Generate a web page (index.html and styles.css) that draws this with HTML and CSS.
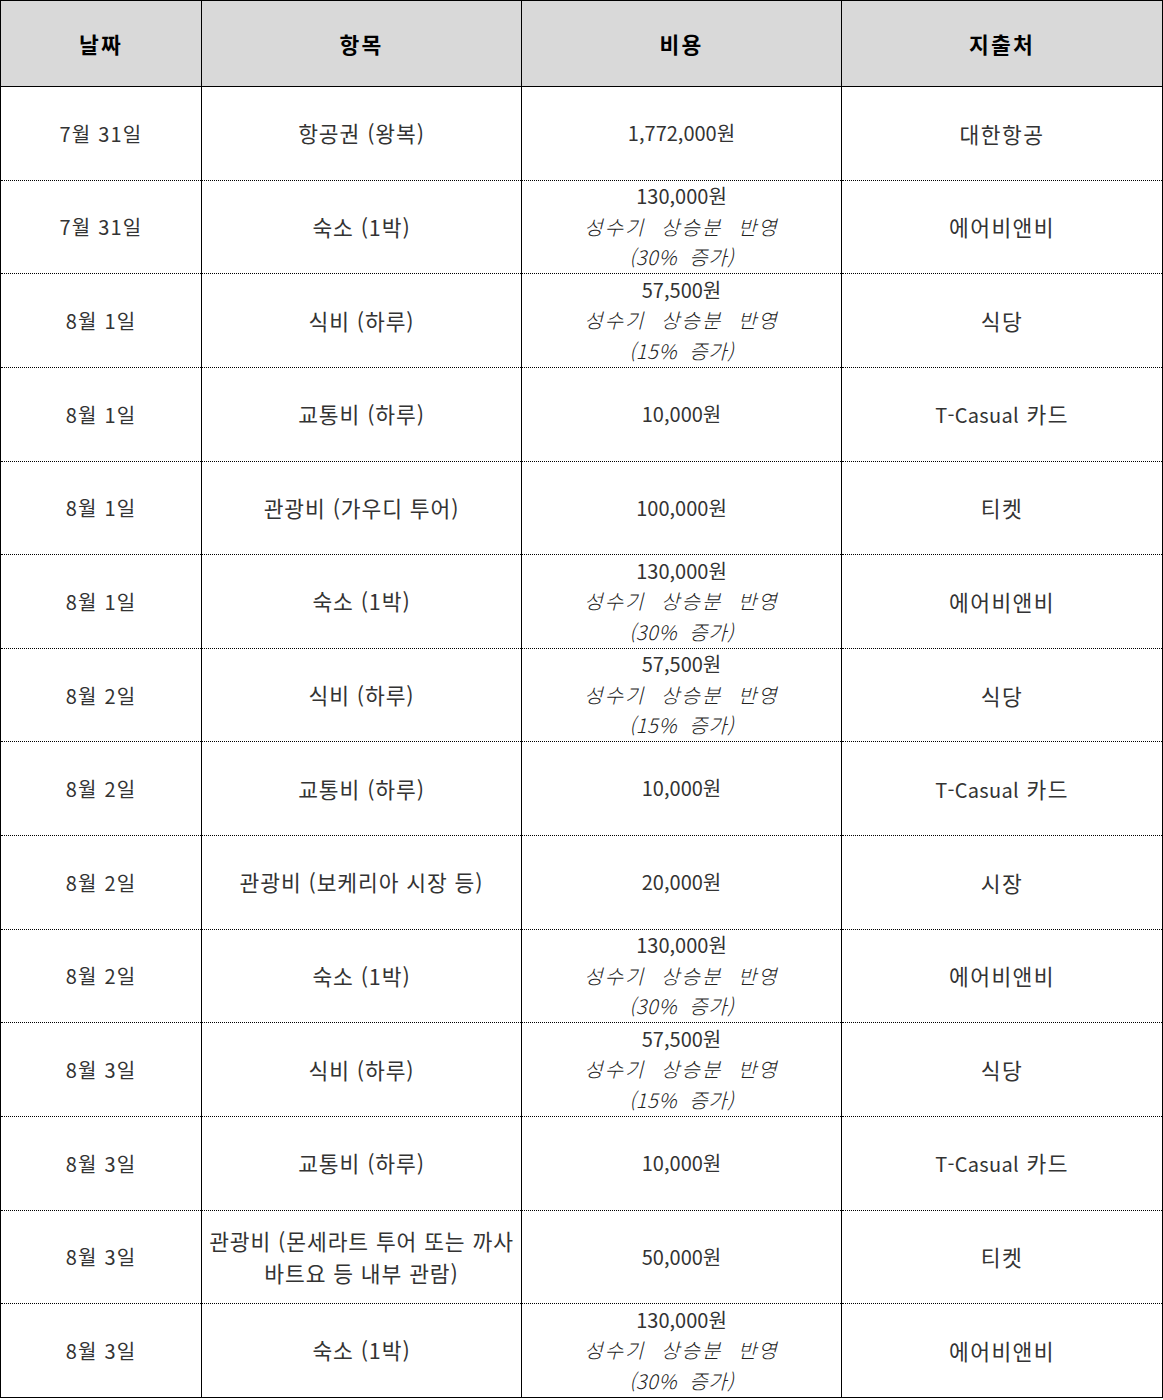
FILE: index.html
```html
<!DOCTYPE html>
<html lang="ko">
<head>
<meta charset="utf-8">
<title>여행 경비</title>
<link rel="stylesheet" href="styles.css">
</head>
<body>
<table class="budget">
  <colgroup>
    <col class="c-date"><col class="c-item"><col class="c-cost"><col class="c-place">
  </colgroup>
  <thead>
    <tr><th>날짜</th><th>항목</th><th>비용</th><th>지출처</th></tr>
  </thead>
  <tbody>
    <tr><td class="date">7월 31일</td><td class="item">항공권 (왕복)</td><td class="cost">1,772,000원</td><td class="place">대한항공</td></tr>
    <tr><td class="date">7월 31일</td><td class="item">숙소 (1박)</td><td class="cost">130,000원<br><span class="note-a">성수기 상승분 반영</span><br><span class="note-b">(30% 증가)</span></td><td class="place">에어비앤비</td></tr>
    <tr><td class="date">8월 1일</td><td class="item">식비 (하루)</td><td class="cost">57,500원<br><span class="note-a">성수기 상승분 반영</span><br><span class="note-b">(15% 증가)</span></td><td class="place">식당</td></tr>
    <tr><td class="date">8월 1일</td><td class="item">교통비 (하루)</td><td class="cost">10,000원</td><td class="place"><span class="latin">T-Casual</span> 카드</td></tr>
    <tr><td class="date">8월 1일</td><td class="item">관광비 (가우디 투어)</td><td class="cost">100,000원</td><td class="place">티켓</td></tr>
    <tr><td class="date">8월 1일</td><td class="item">숙소 (1박)</td><td class="cost">130,000원<br><span class="note-a">성수기 상승분 반영</span><br><span class="note-b">(30% 증가)</span></td><td class="place">에어비앤비</td></tr>
    <tr><td class="date">8월 2일</td><td class="item">식비 (하루)</td><td class="cost">57,500원<br><span class="note-a">성수기 상승분 반영</span><br><span class="note-b">(15% 증가)</span></td><td class="place">식당</td></tr>
    <tr><td class="date">8월 2일</td><td class="item">교통비 (하루)</td><td class="cost">10,000원</td><td class="place"><span class="latin">T-Casual</span> 카드</td></tr>
    <tr><td class="date">8월 2일</td><td class="item">관광비 (보케리아 시장 등)</td><td class="cost">20,000원</td><td class="place">시장</td></tr>
    <tr><td class="date">8월 2일</td><td class="item">숙소 (1박)</td><td class="cost">130,000원<br><span class="note-a">성수기 상승분 반영</span><br><span class="note-b">(30% 증가)</span></td><td class="place">에어비앤비</td></tr>
    <tr><td class="date">8월 3일</td><td class="item">식비 (하루)</td><td class="cost">57,500원<br><span class="note-a">성수기 상승분 반영</span><br><span class="note-b">(15% 증가)</span></td><td class="place">식당</td></tr>
    <tr><td class="date">8월 3일</td><td class="item">교통비 (하루)</td><td class="cost">10,000원</td><td class="place"><span class="latin">T-Casual</span> 카드</td></tr>
    <tr><td class="date">8월 3일</td><td class="item">관광비 (몬세라트 투어 또는 까사<br>바트요 등 내부 관람)</td><td class="cost">50,000원</td><td class="place">티켓</td></tr>
    <tr><td class="date">8월 3일</td><td class="item">숙소 (1박)</td><td class="cost">130,000원<br><span class="note-a">성수기 상승분 반영</span><br><span class="note-b">(30% 증가)</span></td><td class="place">에어비앤비</td></tr>
  </tbody>
</table>
</body>
</html>
```
FILE: styles.css
```css
html, body {
  margin: 0;
  padding: 0;
  background: #ffffff;
}

.budget {
  border-collapse: collapse;
  table-layout: fixed;
  width: 1162px;
  font-family: "Noto Sans CJK KR", "Noto Sans", sans-serif;
  font-size: 20px;
  color: #333333;
}

.c-date { width: 201px; }
.c-item { width: 320px; }
.c-cost { width: 320px; }
.c-place { width: 321px; }

.budget th,
.budget td {
  border-left: 1px solid #000;
  border-right: 1px solid #000;
  text-align: center;
  vertical-align: middle;
  padding: 0;
  line-height: 31px;
  white-space: nowrap;
}

.budget thead tr {
  height: 86px;
}

.budget th {
  background: #d9d9d9;
  color: #000;
  font-weight: bold;
  font-size: 21.5px;
  letter-spacing: 2.3px;
  border-top: 1px solid #000;
  border-bottom: 1px solid #000;
}

.budget tbody tr {
  height: 93.64px;
}

.budget td {
  border-bottom: 1px dotted #000;
}

.budget tbody tr:last-child td {
  border-bottom: 1px solid #000;
}

.budget td.cost {
  line-height: 30.5px;
}

.budget td.item {
  font-size: 21.5px;
  letter-spacing: 0.9px;
  line-height: 32px;
}

.budget td.place {
  font-size: 21.5px;
  letter-spacing: 1.45px;
}

.date { letter-spacing: 1.2px; }

.latin {
  font-size: 20px;
  letter-spacing: 0.3px;
}

.note-a,
.note-b {
  font-style: italic;
  font-weight: 300;
  color: #222222;
}

.note-a {
  letter-spacing: 2px;
  word-spacing: 8px;
}

.note-b {
  letter-spacing: 0.6px;
  word-spacing: 6px;
}
```
